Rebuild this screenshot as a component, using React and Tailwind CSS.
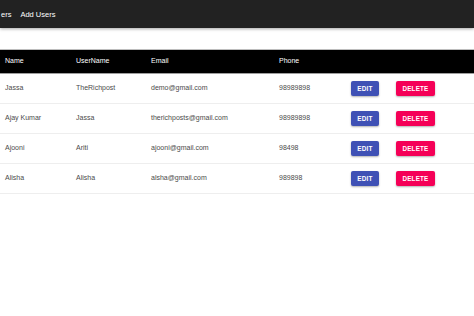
export default function App() {
  const rows = [
    ["Jassa", "TheRichpost", "demo@gmail.com", "98989898"],
    ["Ajay Kumar", "Jassa", "therichposts@gmail.com", "98989898"],
    ["Ajooni", "Ariti", "ajooni@gmail.com", "98498"],
    ["Alisha", "Alisha", "alsha@gmail.com", "989898"],
  ];
  const grid = "grid grid-cols-[71px_75px_128px_72px_45px_1fr] items-center";
  return (
    <div className="w-[474px] h-[316px] bg-white overflow-hidden" style={{ fontFamily: '"Liberation Sans", Arial, sans-serif' }}>
      <div className="h-[28px] pt-[2px] bg-[#222222] shadow-[0_1px_3px_rgba(0,0,0,0.35)] flex items-center overflow-hidden">
        <div className="flex items-center gap-[9px] pl-[1px] text-[7.5px] text-white">
          <span>ers</span>
          <span>Add Users</span>
        </div>
      </div>
      <div className="mt-[21px] border-t border-[#bdbdbd]">
        <div className={`${grid} h-[24px] bg-black text-white text-[7px] border-b border-[#9e9e9e]`}>
          <span className="pl-[5px]">Name</span>
          <span className="pl-[5px]">UserName</span>
          <span className="pl-[5px]">Email</span>
          <span className="pl-[5px]">Phone</span>
          <span></span>
          <span></span>
        </div>
        {rows.map((r, i) => (
          <div key={i} className={`${grid} h-[30px] border-b border-[#eeeeee] text-[7px] text-[#4a4a4a]`}>
            <span className="pl-[5px]">{r[0]}</span>
            <span className="pl-[5px]">{r[1]}</span>
            <span className="pl-[5px]">{r[2]}</span>
            <span className="pl-[5px]">{r[3]}</span>
            <span className="pl-[5px]">
              <button className="w-[28px] h-[15px] rounded-[2px] bg-[#3f51b5] text-white text-[6.4px] font-bold tracking-[0.2px] shadow-[0_1px_2px_rgba(0,0,0,0.3)] flex items-center justify-center">EDIT</button>
            </span>
            <span className="pl-[5px]">
              <button className="w-[39px] h-[15px] rounded-[2px] bg-[#f50057] text-white text-[6.3px] font-bold tracking-[0.2px] shadow-[0_1px_2px_rgba(0,0,0,0.3)] flex items-center justify-center">DELETE</button>
            </span>
          </div>
        ))}
      </div>
    </div>
  );
}
